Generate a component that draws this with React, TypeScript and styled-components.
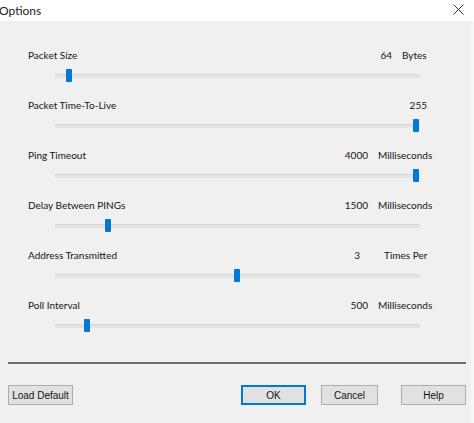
import React from 'react';
import styled, { createGlobalStyle } from 'styled-components';

const GlobalStyle = createGlobalStyle`
  html, body {
    margin: 0;
    padding: 0;
    background: #f0f0f0;
  }
`;

const Window = styled.div`
  display: flex;
  flex-direction: column;
  width: 474px;
  height: 423px;
  overflow: hidden;
  background: #f0f0f0;
  font-family: Lato, 'Liberation Sans', sans-serif;
  color: #141414;
`;

const TitleBar = styled.div`
  display: flex;
  align-items: center;
  height: 21px;
  background: #ffffff;
  flex: 0 0 auto;
`;

const Title = styled.span`
  flex: 1;
  font-size: 12px;
  color: #222;
  margin-left: -1px;
  margin-top: -1px;
`;

const CloseButton = styled.span`
  display: inline-flex;
  color: #333;
  margin: -2px 10px 0 0;
`;

const Client = styled.div`
  display: flex;
  flex-direction: column;
  flex: 1;
  padding-top: 27px;
  box-shadow: inset -3px 0 0 #f8f8f8;
`;

const Row = styled.div`
  display: flex;
  flex-direction: column;
  height: 50px;
  padding-left: 28px;
`;

const Header = styled.div`
  display: flex;
  align-items: center;
  width: 401px;
  height: 14px;
  font-size: 10px;
  line-height: 14px;
  white-space: nowrap;
`;

const Label = styled.span`
  flex: 1;
`;

const Value = styled.span<{ $gap: number }>`
  margin-right: ${(p) => p.$gap}px;
`;

const Unit = styled.span<{ $w: number }>`
  flex: 0 0 ${(p) => p.$w}px;
  width: ${(p) => p.$w}px;
`;

const SliderBox = styled.div`
  position: relative;
  display: flex;
  align-items: center;
  width: 365px;
  height: 13px;
  margin: 7px 0 0 27px;
`;

const Track = styled.div`
  width: 100%;
  height: 4px;
  background: #e4e4e4;
  border-top: 1px solid #d6d6d6;
  box-sizing: border-box;
`;

const Thumb = styled.div`
  position: absolute;
  top: 0;
  width: 6px;
  height: 13px;
  background: #0078d7;
  border-radius: 1px;
`;

const Separator = styled.div`
  margin: 14px 8px 0 8px;
  height: 2px;
  background: #6f6f6f;
`;

const ButtonBar = styled.div`
  display: flex;
  align-items: center;
  padding: 21px 8px 0 8px;
`;

const Button = styled.button<{ $w?: number; $ml?: number; $primary?: boolean }>`
  width: ${(p) => p.$w ?? 65}px;
  height: 20px;
  margin-left: ${(p) => p.$ml ?? 0}px;
  padding: 0;
  box-sizing: border-box;
  background: #e1e1e1;
  border: 1px solid ${(p) => (p.$primary ? '#0078d7' : '#adadad')};
  box-shadow: ${(p) => (p.$primary ? 'inset 0 0 0 1px #0078d7' : 'none')};
  color: #111;
  font-family: 'Liberation Sans', Arial, sans-serif;
  font-size: 10px;
`;

const Spacer = styled.div`
  flex: 1;
`;

const CloseIcon = () => (
  <svg width="11" height="11" viewBox="0 0 11 11" fill="none" aria-hidden="true">
    <path d="M0.5 0.5l10 10M10.5 0.5l-10 10" stroke="currentColor" strokeWidth="1" />
  </svg>
);

type Setting = {
  label: string;
  value: string;
  unit?: string;
  unitW: number;
  gap: number;
  pos: number;
};

const settings: Setting[] = [
  { label: 'Packet Size', value: '64', unit: 'Bytes', unitW: 27, gap: 10, pos: 11 },
  { label: 'Packet Time-To-Live', value: '255', unitW: 0, gap: 2, pos: 358 },
  { label: 'Ping Timeout', value: '4000', unit: 'Milliseconds', unitW: 51, gap: 10, pos: 358 },
  { label: 'Delay Between PINGs', value: '1500', unit: 'Milliseconds', unitW: 51, gap: 10, pos: 50 },
  { label: 'Address Transmitted', value: '3', unit: 'Times Per', unitW: 45, gap: 24, pos: 179 },
  { label: 'Poll Interval', value: '500', unit: 'Milliseconds', unitW: 51, gap: 10, pos: 29 },
];

const App: React.FC = () => (
  <>
    <GlobalStyle />
    <Window>
      <TitleBar>
        <Title>Options</Title>
        <CloseButton>
          <CloseIcon />
        </CloseButton>
      </TitleBar>
      <Client>
        {settings.map((s) => (
          <Row key={s.label}>
            <Header>
              <Label>{s.label}</Label>
              <Value $gap={s.gap}>{s.value}</Value>
              {s.unit && <Unit $w={s.unitW}>{s.unit}</Unit>}
            </Header>
            <SliderBox>
              <Track />
              <Thumb style={{ left: `${s.pos}px` }} />
            </SliderBox>
          </Row>
        ))}
        <Separator />
        <ButtonBar>
          <Button>Load Default</Button>
          <Spacer />
          <Button $primary>OK</Button>
          <Button $w={57} $ml={15}>Cancel</Button>
          <Button $ml={23}>Help</Button>
        </ButtonBar>
      </Client>
    </Window>
  </>
);

export default App;
